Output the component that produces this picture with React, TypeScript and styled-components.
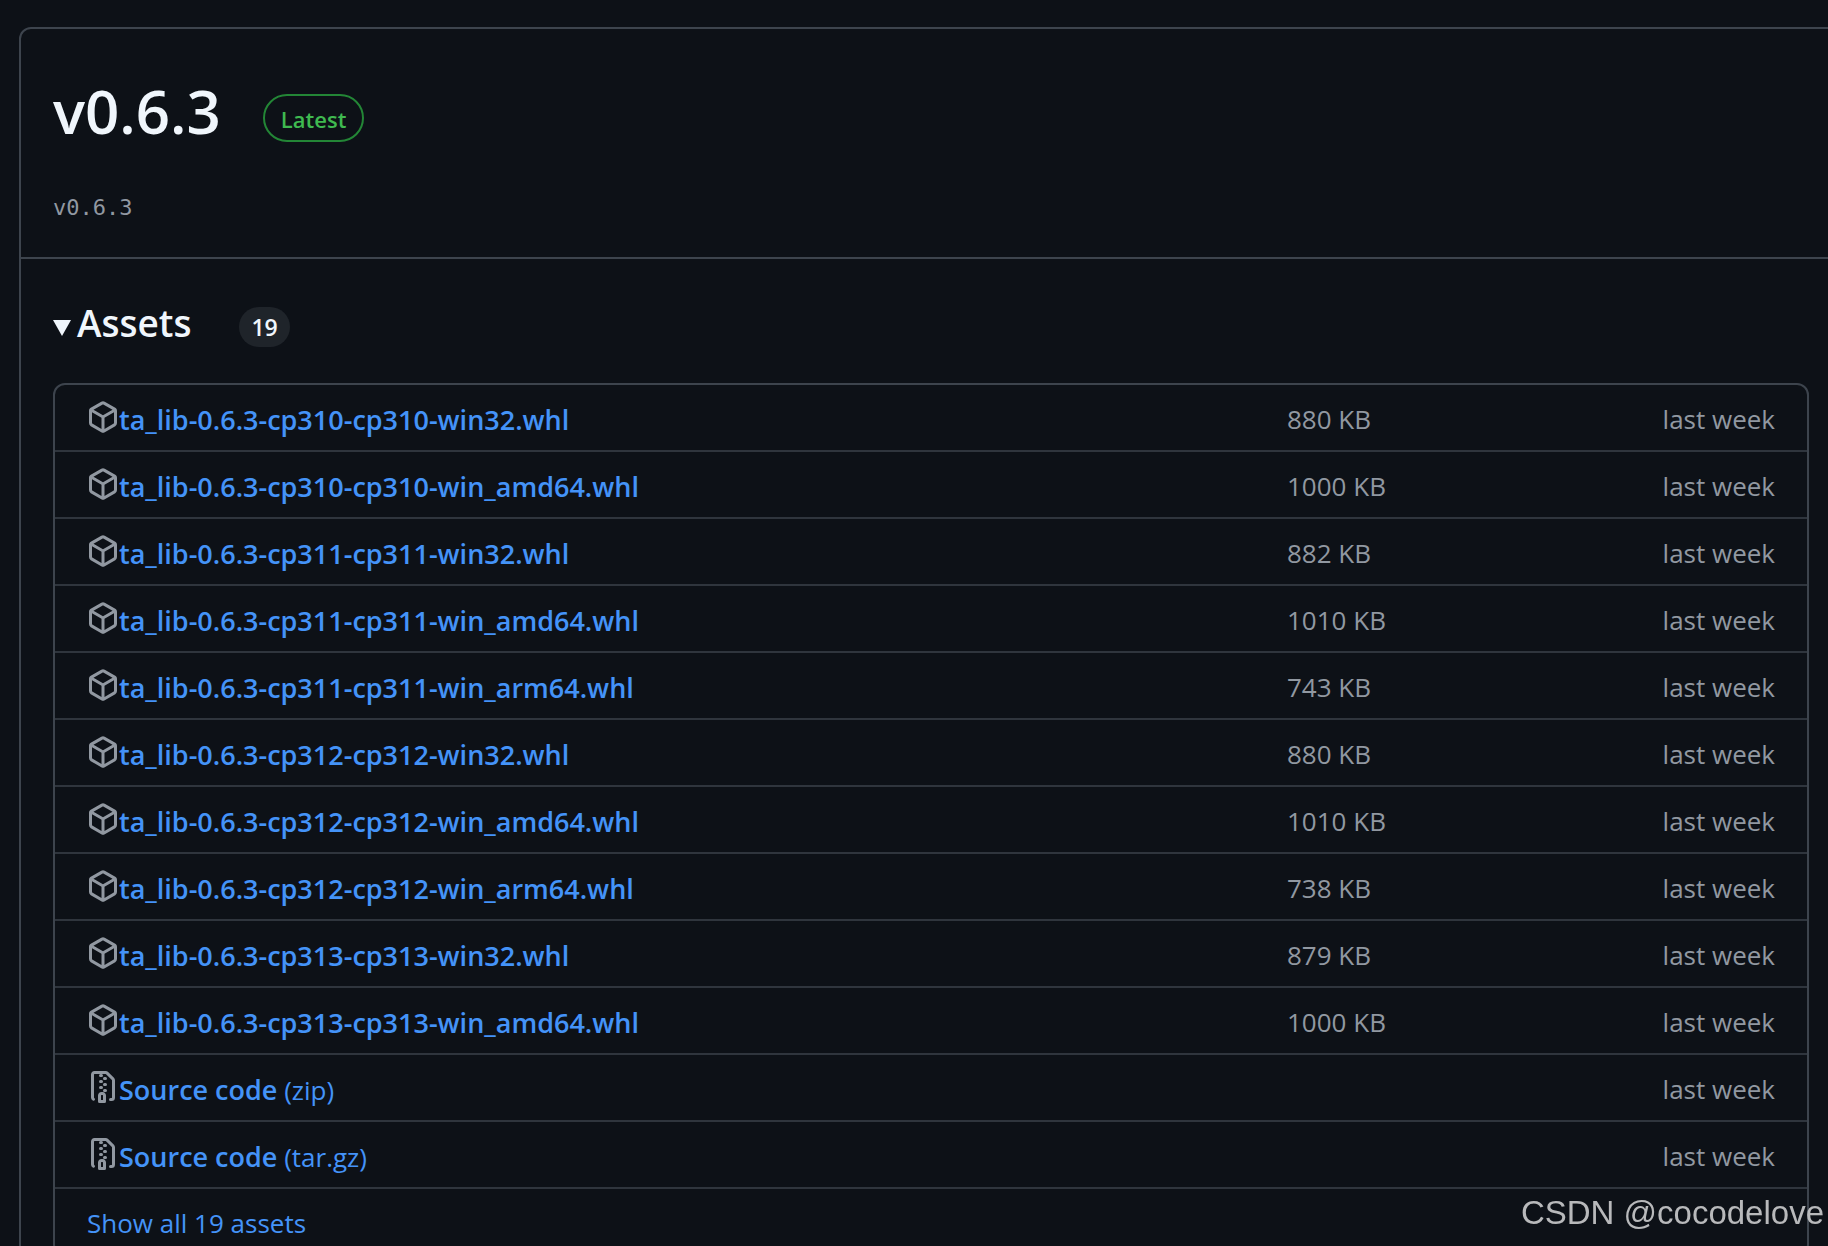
import React, { useState } from "react";
import styled, { createGlobalStyle } from "styled-components";

const sans = `"Segoe UI", "Open Sans", "Noto Sans", sans-serif`;
const mono = `"DejaVu Sans Mono", monospace`;

const color = {
  canvas: "#0d1117",
  border: "#3d444d",
  borderMuted: "#2f353d",
  text: "#f0f6fc",
  muted: "#9198a1",
  link: "#4493f8",
  success: "#3fb950",
  successBorder: "#238636",
  counter: "#1f242a",
};

const GlobalStyle = createGlobalStyle`
  *, *::before, *::after { box-sizing: border-box; }
  body {
    margin: 0;
    background: ${color.canvas};
    color: ${color.text};
    font-family: ${sans};
    font-size: 26px;
    line-height: 38px;
  }
`;

const Page = styled.main`
  height: 100vh;
  overflow: hidden;
  padding: 27px 0 0 19px;
`;

const ReleaseCard = styled.article`
  margin-right: -15px;
  border: 2px solid ${color.border};
  border-radius: 12px;
`;

const ReleaseHeader = styled.header`
  padding: 40px 32px 33px;
`;

const TitleRow = styled.div`
  display: flex;
  align-items: center;
  gap: 42px;
`;

const Title = styled.h1`
  margin: 0;
  font-size: 60px;
  font-weight: 600;
  line-height: 84px;
`;

const LatestLabel = styled.a`
  margin-top: 14px;
  padding: 2px 16px 0;
  border: 2px solid ${color.successBorder};
  border-radius: 24px;
  color: ${color.success};
  font-size: 22px;
  font-weight: 600;
  line-height: 42px;
  text-decoration: none;
`;

const TagName = styled.p`
  margin: 39px 0 0;
  color: ${color.muted};
  font-family: ${mono};
  font-size: 22px;
  line-height: 32px;
`;

const Assets = styled.details`
  padding: 32px;
  border-top: 2px solid ${color.border};
`;

const AssetsSummary = styled.summary`
  display: flex;
  align-items: center;
  gap: 6px;
  margin-bottom: 28px;
  cursor: pointer;
  list-style: none;

  &::-webkit-details-marker { display: none; }
`;

const Triangle = styled.svg`
  width: 18px;
  height: 16px;
  margin-top: 10px;
  fill: ${color.text};
`;

const AssetsTitle = styled.h2`
  margin: 0;
  font-size: 37px;
  font-weight: 600;
  line-height: 64px;
`;

const Counter = styled.span`
  margin: 8px 0 0 42px;
  padding: 0 12px;
  border-radius: 20px;
  background: ${color.counter};
  font-size: 23px;
  font-weight: 600;
  line-height: 40px;
`;

const AssetList = styled.ul`
  margin: 0;
  padding: 0;
  border: 2px solid ${color.border};
  border-radius: 12px;
  list-style: none;
`;

const AssetRow = styled.li`
  display: grid;
  grid-template-columns: minmax(0, 1fr) 344px 144px;
  min-height: 65px;
  padding: 16px 32px 11px;

  & + & {
    min-height: 67px;
    border-top: 2px solid ${color.borderMuted};
  }
`;

const NameCell = styled.div`
  display: flex;
  align-items: flex-start;
`;

const Octicon = styled.svg`
  flex: none;
  width: 32px;
  height: 32px;
  fill: ${color.muted};
`;

const AssetLink = styled.a`
  color: ${color.link};
  text-decoration: none;
`;

const AssetName = styled.span`
  font-size: 27px;
  font-weight: 600;
`;

const Meta = styled.span<{ $end?: boolean }>`
  color: ${color.muted};
  line-height: 36px;
  text-align: ${(p) => (p.$end ? "right" : "left")};
  white-space: nowrap;
`;

const ShowAll = styled.button`
  place-self: start;
  padding: 0;
  border: 0;
  background: none;
  color: ${color.link};
  font: inherit;
  line-height: 36px;
  cursor: pointer;
`;

const Watermark = styled.div`
  position: fixed;
  right: 4px;
  bottom: 13px;
  color: #b8b9bb;
  font-family: "Liberation Sans", Arial, sans-serif;
  font-size: 33px;
  line-height: 40px;
`;

const paths = {
  package:
    "m8.878.392 5.25 3.045c.54.314.872.89.872 1.514v6.098a1.75 1.75 0 0 1-.872 1.514l-5.25 3.045a1.75 1.75 0 0 1-1.756 0l-5.25-3.045A1.75 1.75 0 0 1 1 11.049V4.951c0-.624.332-1.201.872-1.514L7.122.392a1.75 1.75 0 0 1 1.756 0ZM7.875 1.69l-4.63 2.685L8 7.133l4.755-2.758-4.63-2.685a.248.248 0 0 0-.25 0ZM2.5 5.677v5.372c0 .09.047.171.125.216l4.625 2.683V8.432Zm6.25 8.271 4.625-2.683a.25.25 0 0 0 .125-.216V5.677L8.75 8.432Z",
  zip: "M3.5 1.75v11.5c0 .09.048.173.126.217a.75.75 0 0 1-.752 1.298A1.748 1.748 0 0 1 2 13.25V1.75C2 .784 2.784 0 3.75 0h5.586c.464 0 .909.185 1.237.513l2.914 2.914c.329.328.513.773.513 1.237v8.586A1.75 1.75 0 0 1 12.25 15h-.5a.75.75 0 0 1 0-1.5h.5a.25.25 0 0 0 .25-.25V4.664a.25.25 0 0 0-.073-.177L9.513 1.573a.25.25 0 0 0-.177-.073H7.25a.75.75 0 0 1 0 1.5h-.5a.75.75 0 0 1 0-1.5h-3a.25.25 0 0 0-.25.25Zm3.75 8.75h.5c.966 0 1.75.784 1.75 1.75v3a.75.75 0 0 1-.75.75h-2.5a.75.75 0 0 1-.75-.75v-3c0-.966.784-1.75 1.75-1.75ZM6 5.25a.75.75 0 0 1 .75-.75h.5a.75.75 0 0 1 0 1.5h-.5A.75.75 0 0 1 6 5.25Zm.75 2.25h.5a.75.75 0 0 1 0 1.5h-.5a.75.75 0 0 1 0-1.5ZM8 6.75A.75.75 0 0 1 8.75 6h.5a.75.75 0 0 1 0 1.5h-.5A.75.75 0 0 1 8 6.75ZM8.75 3h.5a.75.75 0 0 1 0 1.5h-.5a.75.75 0 0 1 0-1.5ZM8 9.75A.75.75 0 0 1 8.75 9h.5a.75.75 0 0 1 0 1.5h-.5A.75.75 0 0 1 8 9.75Zm-1 2.5v2.25h1v-2.25a.25.25 0 0 0-.25-.25h-.5a.25.25 0 0 0-.25.25Z",
};

type Asset = { icon: keyof typeof paths; name: string; format?: string; size?: string };

const assets: Asset[] = [
  { icon: "package", name: "ta_lib-0.6.3-cp310-cp310-win32.whl", size: "880 KB" },
  { icon: "package", name: "ta_lib-0.6.3-cp310-cp310-win_amd64.whl", size: "1000 KB" },
  { icon: "package", name: "ta_lib-0.6.3-cp311-cp311-win32.whl", size: "882 KB" },
  { icon: "package", name: "ta_lib-0.6.3-cp311-cp311-win_amd64.whl", size: "1010 KB" },
  { icon: "package", name: "ta_lib-0.6.3-cp311-cp311-win_arm64.whl", size: "743 KB" },
  { icon: "package", name: "ta_lib-0.6.3-cp312-cp312-win32.whl", size: "880 KB" },
  { icon: "package", name: "ta_lib-0.6.3-cp312-cp312-win_amd64.whl", size: "1010 KB" },
  { icon: "package", name: "ta_lib-0.6.3-cp312-cp312-win_arm64.whl", size: "738 KB" },
  { icon: "package", name: "ta_lib-0.6.3-cp313-cp313-win32.whl", size: "879 KB" },
  { icon: "package", name: "ta_lib-0.6.3-cp313-cp313-win_amd64.whl", size: "1000 KB" },
  { icon: "zip", name: "Source code", format: "(zip)" },
  { icon: "zip", name: "Source code", format: "(tar.gz)" },
];

export default function App() {
  const [open, setOpen] = useState(true);

  return (
    <>
      <GlobalStyle />
      <Page>
        <ReleaseCard>
          <ReleaseHeader>
            <TitleRow>
              <Title>v0.6.3</Title>
              <LatestLabel href="#latest">Latest</LatestLabel>
            </TitleRow>
            <TagName>v0.6.3</TagName>
          </ReleaseHeader>
          <Assets open={open} onToggle={(e) => setOpen(e.currentTarget.open)}>
            <AssetsSummary>
              <Triangle viewBox="0 0 18 16" aria-hidden="true">
                <path d={open ? "M0 0h18L9 16Z" : "M2 0l14 8L2 16Z"} />
              </Triangle>
              <AssetsTitle>Assets</AssetsTitle>
              <Counter>19</Counter>
            </AssetsSummary>
            <AssetList>
              {assets.map((asset) => (
                <AssetRow key={asset.name + (asset.format ?? "")}>
                  <NameCell>
                    <Octicon viewBox="0 0 16 16" aria-hidden="true">
                      <path d={paths[asset.icon]} />
                    </Octicon>
                    <AssetLink href="#download">
                      <AssetName>{asset.name}</AssetName>
                      {asset.format && ` ${asset.format}`}
                    </AssetLink>
                  </NameCell>
                  <Meta>{asset.size}</Meta>
                  <Meta $end>last week</Meta>
                </AssetRow>
              ))}
              <AssetRow>
                <ShowAll type="button">Show all 19 assets</ShowAll>
              </AssetRow>
            </AssetList>
          </Assets>
        </ReleaseCard>
        <Watermark>CSDN @cocodelove</Watermark>
      </Page>
    </>
  );
}
